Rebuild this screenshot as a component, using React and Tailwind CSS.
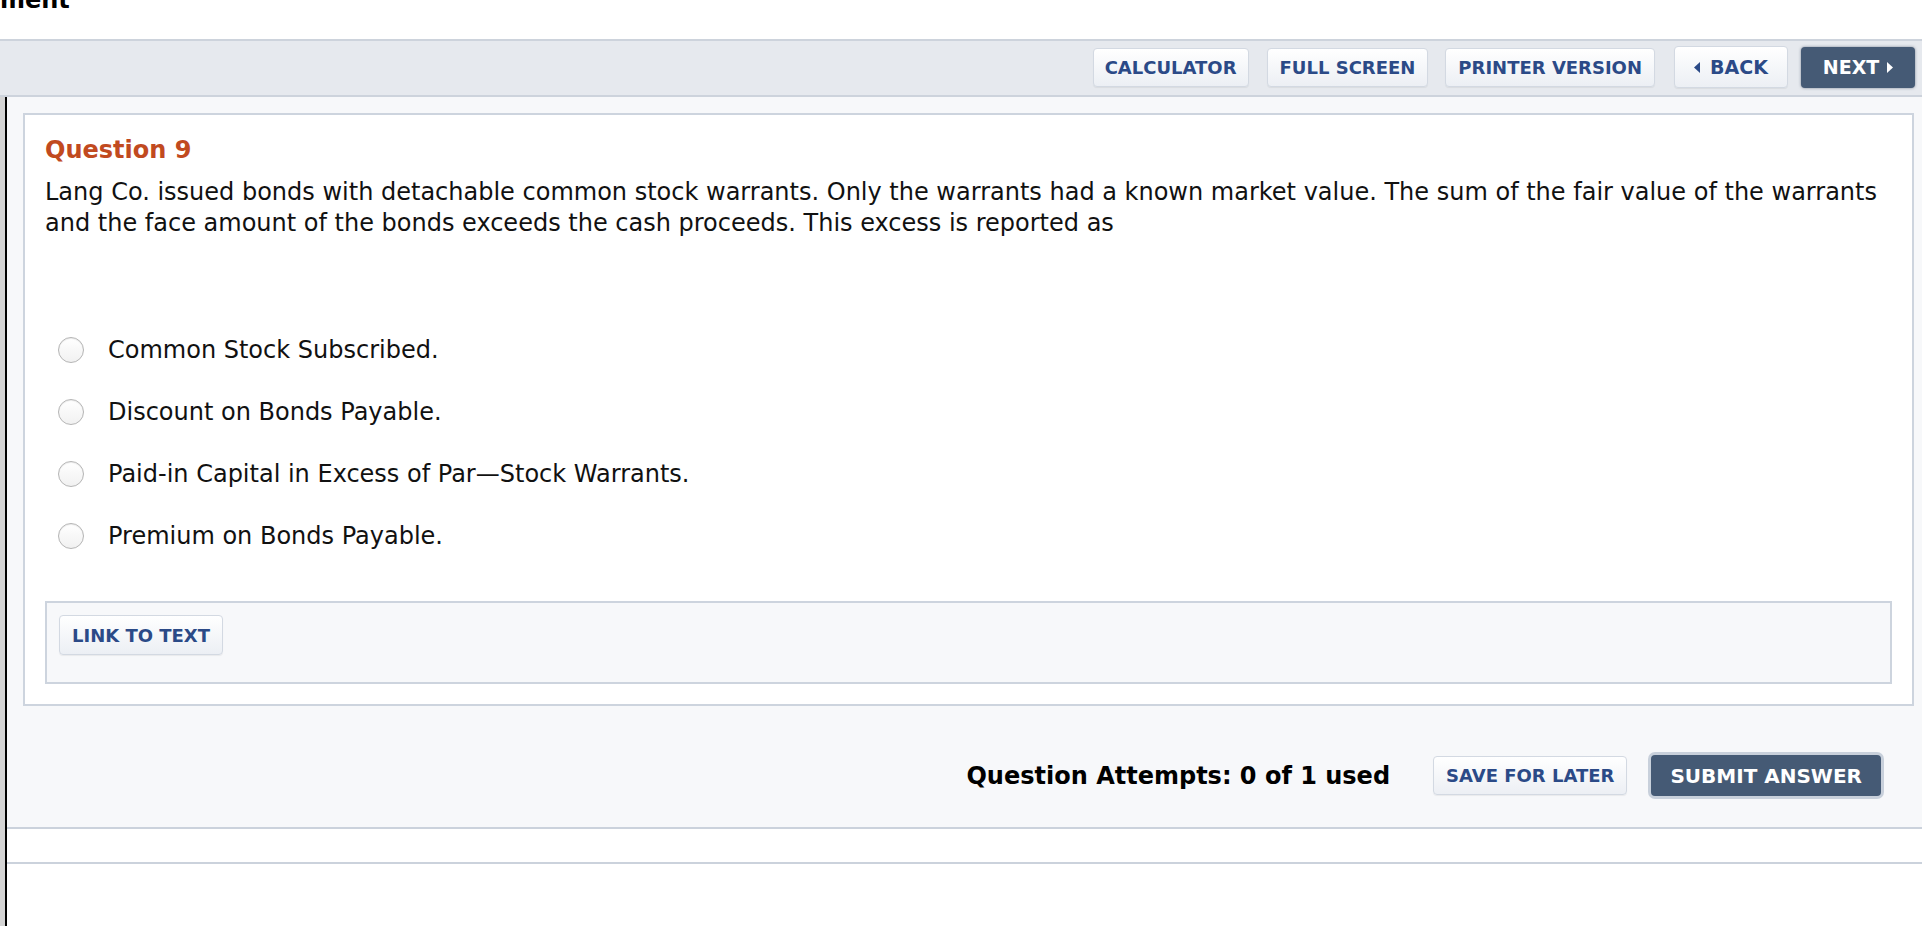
import React, { useState } from "react";

const choices = [
  "Common Stock Subscribed.",
  "Discount on Bonds Payable.",
  "Paid-in Capital in Excess of Par\u2014Stock Warrants.",
  "Premium on Bonds Payable.",
];

const lightBtn =
  "flex items-center justify-center rounded-[4px] border border-[#d3d9e2] bg-linear-to-b from-white to-[#eceff4] font-bold text-[#2b4a87] shadow-[0_1px_1px_rgba(0,0,0,0.06)]";

const darkBtn =
  "flex items-center justify-center rounded-[4px] bg-[#455a75] font-bold text-white";

const Radio = ({ checked, onClick }) => (
  <button
    type="button"
    onClick={onClick}
    className="flex h-[26px] w-[26px] shrink-0 items-center justify-center rounded-full border border-[#b5b5b5] bg-linear-to-b from-white to-[#f1f1f1] shadow-[inset_0_1px_1px_rgba(0,0,0,0.08)]"
  >
    {checked && <span className="h-[10px] w-[10px] rounded-full bg-[#3b6fd6]" />}
  </button>
);

const App = () => {
  const [picked, setPicked] = useState(null);

  return (
    <div className="min-h-screen bg-white font-['DejaVu_Sans','Verdana',sans-serif] text-[#111]">
      {/* heading cut off by the viewport */}
      <div className="h-[39px] overflow-hidden">
        <div className="-mt-[12px] text-[24px] font-bold leading-none text-black">ment</div>
      </div>

      {/* toolbar */}
      <div className="flex h-[58px] items-center justify-end border-y-2 border-[#cdd3dc] bg-[#e6e9ee] pb-[2px] pr-[7px]">
        <div className="flex items-center">
          <button className={`${lightBtn} h-[39px] px-[11px] text-[18px]`}>CALCULATOR</button>
          <button className={`${lightBtn} ml-[18px] h-[39px] px-[12px] text-[18px]`}>FULL SCREEN</button>
          <button className={`${lightBtn} ml-[17px] h-[39px] px-[12px] text-[18px]`}>PRINTER VERSION</button>
          <button className={`${lightBtn} ml-[19px] h-[42px] w-[114px] gap-[10px] text-[19px]`}>
            <svg width="6" height="11" viewBox="0 0 6 11">
              <polygon points="6,0 0,5.5 6,11" fill="currentColor" />
            </svg>
            BACK
          </button>
          <button
            className={`${darkBtn} ml-[13px] h-[41px] w-[114px] gap-[8px] text-[19px] shadow-[0_0_3px_rgba(40,55,80,0.55)]`}
          >
            NEXT
            <svg width="6" height="11" viewBox="0 0 6 11">
              <polygon points="0,0 6,5.5 0,11" fill="currentColor" />
            </svg>
          </button>
        </div>
      </div>

      <div className="flex min-h-[829px]">
        <div className="w-[5px] bg-[#d4d4d4]" />
        <div className="w-[2px] bg-black" />

        <div className="flex flex-1 flex-col">
          <div className="border-b-2 border-[#cbd2dc] bg-[#f7f8fa] pl-[16px] pr-[8px] pt-[16px]">
            {/* question card */}
            <div className="border-2 border-[#cdd4de] bg-white px-[20px] py-[20px]">
              <h2 className="text-[24px] font-bold leading-[31px] text-[#c14a1f]">Question 9</h2>
              <p className="mt-[11px] text-[24px] leading-[31px]">
                Lang Co. issued bonds with detachable common stock warrants. Only the warrants had a known
                market value. The sum of the fair value of the warrants and the face amount of the bonds
                exceeds the cash proceeds. This excess is reported as
              </p>

              <div className="mt-[80px] flex flex-col pl-[13px]">
                {choices.map((c, i) => (
                  <label key={c} className="flex h-[62px] cursor-pointer items-center gap-[24px]">
                    <Radio checked={picked === i} onClick={() => setPicked(i)} />
                    <span className="text-[24px] leading-[31px]">{c}</span>
                  </label>
                ))}
              </div>

              <div className="mt-[34px] h-[83px] border-2 border-[#cdd4de] bg-[#f7f8fa] pl-[12px] pt-[12px]">
                <button className={`${lightBtn} h-[40px] px-[12px] text-[18px]`}>LINK TO TEXT</button>
              </div>
            </div>

            {/* footer */}
            <div className="flex h-[121px] items-start justify-end pr-[33px] pt-[49px]">
              <div className="flex items-center">
                <span className="text-[24px] font-bold text-black">Question Attempts: 0 of 1 used</span>
                <button className={`${lightBtn} ml-[43px] h-[39px] px-[12px] text-[18px]`}>SAVE FOR LATER</button>
                <button
                  className={`${darkBtn} ml-[24px] h-[41px] px-[19px] text-[20px] shadow-[0_0_0_3px_#c8d0db]`}
                >
                  SUBMIT ANSWER
                </button>
              </div>
            </div>
          </div>

          <div className="h-[33px]" />
          <div className="border-t-2 border-[#cbd2dc]" />
        </div>
      </div>
    </div>
  );
};

export default App;
